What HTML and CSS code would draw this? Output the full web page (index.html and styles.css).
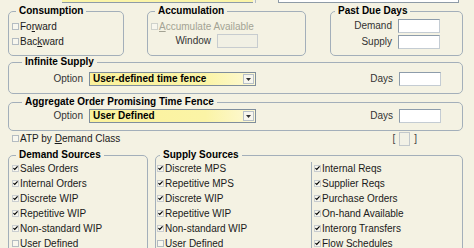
FILE: index.html
```html
<!DOCTYPE html>
<html>
<head>
<meta charset="utf-8">
<link rel="stylesheet" href="styles.css">
</head>
<body>
<div class="topstrip">
  <div class="ts-yellow"></div>
  <div class="ts-sep"></div>
  <div class="ts-white"></div>
</div>

<div class="row1">
  <fieldset class="grp cons">
    <legend>Consumption</legend>
    <div class="cbrow"><span class="cb"></span><span>Fo<u>r</u>ward</span></div>
    <div class="cbrow"><span class="cb"></span><span>Bac<u>k</u>ward</span></div>
  </fieldset>
  <fieldset class="grp accu">
    <legend>Accumulation</legend>
    <div class="cbrow dis"><span class="cb dis"></span><span><u>A</u>ccumulate Available</span></div>
    <div class="frow"><span class="lbl win-lbl">Window</span><span class="inp dis w41"></span></div>
  </fieldset>
  <fieldset class="grp past">
    <legend>Past Due Days</legend>
    <div class="frow r-dem"><span class="lbl pd-lbl">Demand</span><span class="inp w42"></span></div>
    <div class="frow r-sup"><span class="lbl pd-lbl">Supply</span><span class="inp w42"></span></div>
  </fieldset>
</div>

<fieldset class="grp wide inf">
  <legend>Infinite Supply</legend>
  <div class="frow opt">
    <span class="lbl opt-lbl">Option</span>
    <span class="sel"><span class="sel-txt">User-defined time fence</span><span class="sel-btn"><svg width="5" height="3" viewBox="0 0 5 3"><path d="M0 0H5L2.5 3Z" fill="#333"/></svg></span></span>
    <span class="fill"></span>
    <span class="lbl">Days</span>
    <span class="inp w42 days"></span>
  </div>
</fieldset>

<fieldset class="grp wide agg">
  <legend>Aggregate Order Promising Time Fence</legend>
  <div class="frow opt">
    <span class="lbl opt-lbl">Option</span>
    <span class="sel"><span class="sel-txt">User Defined</span><span class="sel-btn"><svg width="5" height="3" viewBox="0 0 5 3"><path d="M0 0H5L2.5 3Z" fill="#333"/></svg></span></span>
    <span class="fill"></span>
    <span class="lbl">Days</span>
    <span class="inp w42 days"></span>
  </div>
</fieldset>

<div class="atp">
  <div class="cbrow"><span class="cb"></span><span>ATP by <u>D</u>emand Class</span></div>
  <span class="fill"></span>
  <span class="brk">[</span><span class="mini"></span><span class="brk">]</span>
</div>

<div class="row4">
  <fieldset class="grp dem">
    <legend>Demand Sources</legend>
    <div class="list">
      <div class="cbrow"><span class="cb on"><svg width="7" height="6" viewBox="0 0 7 6"><path d="M0.6 3.2L2.5 5L6.4 0.8" fill="none" stroke="#000" stroke-width="1.6"/></svg></span><span>Sales Orders</span></div>
      <div class="cbrow"><span class="cb on"><svg width="7" height="6" viewBox="0 0 7 6"><path d="M0.6 3.2L2.5 5L6.4 0.8" fill="none" stroke="#000" stroke-width="1.6"/></svg></span><span>Internal Orders</span></div>
      <div class="cbrow"><span class="cb on"><svg width="7" height="6" viewBox="0 0 7 6"><path d="M0.6 3.2L2.5 5L6.4 0.8" fill="none" stroke="#000" stroke-width="1.6"/></svg></span><span>Discrete WIP</span></div>
      <div class="cbrow"><span class="cb on"><svg width="7" height="6" viewBox="0 0 7 6"><path d="M0.6 3.2L2.5 5L6.4 0.8" fill="none" stroke="#000" stroke-width="1.6"/></svg></span><span>Repetitive WIP</span></div>
      <div class="cbrow"><span class="cb on"><svg width="7" height="6" viewBox="0 0 7 6"><path d="M0.6 3.2L2.5 5L6.4 0.8" fill="none" stroke="#000" stroke-width="1.6"/></svg></span><span>Non-standard WIP</span></div>
      <div class="cbrow"><span class="cb"></span><span>User Defined</span></div>
    </div>
  </fieldset>
  <fieldset class="grp sup">
    <legend>Supply Sources</legend>
    <div class="cols">
      <div class="list col-l">
        <div class="cbrow"><span class="cb on"><svg width="7" height="6" viewBox="0 0 7 6"><path d="M0.6 3.2L2.5 5L6.4 0.8" fill="none" stroke="#000" stroke-width="1.6"/></svg></span><span>Discrete MPS</span></div>
        <div class="cbrow"><span class="cb on"><svg width="7" height="6" viewBox="0 0 7 6"><path d="M0.6 3.2L2.5 5L6.4 0.8" fill="none" stroke="#000" stroke-width="1.6"/></svg></span><span>Repetitive MPS</span></div>
        <div class="cbrow"><span class="cb on"><svg width="7" height="6" viewBox="0 0 7 6"><path d="M0.6 3.2L2.5 5L6.4 0.8" fill="none" stroke="#000" stroke-width="1.6"/></svg></span><span>Discrete WIP</span></div>
        <div class="cbrow"><span class="cb on"><svg width="7" height="6" viewBox="0 0 7 6"><path d="M0.6 3.2L2.5 5L6.4 0.8" fill="none" stroke="#000" stroke-width="1.6"/></svg></span><span>Repetitive WIP</span></div>
        <div class="cbrow"><span class="cb on"><svg width="7" height="6" viewBox="0 0 7 6"><path d="M0.6 3.2L2.5 5L6.4 0.8" fill="none" stroke="#000" stroke-width="1.6"/></svg></span><span>Non-standard WIP</span></div>
        <div class="cbrow"><span class="cb"></span><span>User Defined</span></div>
      </div>
      <div class="list col-r">
        <div class="cbrow"><span class="cb on"><svg width="7" height="6" viewBox="0 0 7 6"><path d="M0.6 3.2L2.5 5L6.4 0.8" fill="none" stroke="#000" stroke-width="1.6"/></svg></span><span>Internal Reqs</span></div>
        <div class="cbrow"><span class="cb on"><svg width="7" height="6" viewBox="0 0 7 6"><path d="M0.6 3.2L2.5 5L6.4 0.8" fill="none" stroke="#000" stroke-width="1.6"/></svg></span><span>Supplier Reqs</span></div>
        <div class="cbrow"><span class="cb on"><svg width="7" height="6" viewBox="0 0 7 6"><path d="M0.6 3.2L2.5 5L6.4 0.8" fill="none" stroke="#000" stroke-width="1.6"/></svg></span><span>Purchase Orders</span></div>
        <div class="cbrow"><span class="cb on"><svg width="7" height="6" viewBox="0 0 7 6"><path d="M0.6 3.2L2.5 5L6.4 0.8" fill="none" stroke="#000" stroke-width="1.6"/></svg></span><span>On-hand Available</span></div>
        <div class="cbrow"><span class="cb on"><svg width="7" height="6" viewBox="0 0 7 6"><path d="M0.6 3.2L2.5 5L6.4 0.8" fill="none" stroke="#000" stroke-width="1.6"/></svg></span><span>Interorg Transfers</span></div>
        <div class="cbrow"><span class="cb on"><svg width="7" height="6" viewBox="0 0 7 6"><path d="M0.6 3.2L2.5 5L6.4 0.8" fill="none" stroke="#000" stroke-width="1.6"/></svg></span><span>Flow Schedules</span></div>
      </div>
    </div>
  </fieldset>
</div>
</body>
</html>
```

FILE: styles.css
```css
* { box-sizing: border-box; }

html, body {
  margin: 0;
  padding: 0;
}

body {
  width: 474px;
  height: 248px;
  overflow: hidden;
  background: #f4f2e3;
  font-family: "Liberation Sans Narrow", "Liberation Sans", Arial, sans-serif;
  font-size: 10px;
  line-height: 12px;
  color: #1a1a1a;
}

u { text-decoration: underline; text-underline-offset: 1px; }

/* top strip (bottom edge of fields above) */
.topstrip {
  display: flex;
  height: 3px;
}
.ts-yellow {
  margin-left: 62px;
  width: 191px;
  background: #fbf5a8;
  border-bottom: 1px solid #8e9ba7;
}
.ts-sep {
  margin-left: 2px;
  width: 1px;
  background: #b5bec5;
}
.ts-white {
  margin-left: 22px;
  width: 181px;
  background: #ffffff;
  border: 1px solid #8e9ba7;
  border-top: 0;
}

/* group boxes */
.grp {
  margin: 0;
  padding: 0;
  min-width: 0;
  border: 1px solid #a3afba;
  border-radius: 5px;
}
.grp legend {
  font-weight: bold;
  line-height: 10px;
  padding: 0 3px;
  margin-left: 4px;
  color: #000;
}

.row1 {
  display: flex;
  margin-top: 3px;
  padding-left: 8px;
}
.row1 .grp { height: 50px; }
.cons { width: 116px; padding: 3px 0 0 3px; }
.accu { width: 159px; margin-left: 23px; padding: 3px 0 0 3px; }
.past { width: 133px; margin-left: 24px; padding: 3px 0 0 0; }

.cbrow {
  display: flex;
  align-items: center;
  height: 15px;
  white-space: nowrap;
}
.cbrow.dis { color: #a3a394; }

.cb {
  display: inline-flex;
  align-items: center;
  justify-content: center;
  width: 7px;
  height: 7px;
  margin-right: 1px;
  border: 1px solid #b4bcc2;
  background: #f8f7ee;
  flex: none;
}
.cb.dis { border-color: #cfd2cc; }
.cb.on { border-color: #c9cdd0; }
.cb svg { display: block; margin-top: -1px; }

.frow {
  display: flex;
  align-items: center;
  height: 14px;
  white-space: nowrap;
}
.lbl { color: #333; }
.win-lbl { width: 60px; text-align: right; margin-right: 6px; }
.pd-lbl { width: 61px; text-align: right; margin-right: 6px; }
.r-sup { margin-top: 2px; }

.inp {
  display: block;
  height: 14px;
  background: #fff;
  border: 1px solid #8d9cab;
  border-right-color: #c4ccd3;
  border-bottom-color: #c4ccd3;
}
.inp.dis {
  background: #f1f0e4;
  border-color: #c7cccf;
}
.w41 { width: 41px; }
.w42 { width: 42px; }

/* wide groups */
.wide {
  margin-left: 8px;
  width: 455px;
  padding: 0 21px 7px 9px;
}
.inf { margin-top: 1px; padding-top: 5px; }
.agg { margin-top: 3px; padding-top: 2px; }
.opt-lbl { width: 65px; text-align: right; margin-right: 6px; }
.days { margin-left: 6px; }
.fill { flex: 1; }

.sel {
  display: flex;
  align-items: center;
  width: 167px;
  height: 14px;
  border: 1px solid #7f8e9c;
  background: linear-gradient(to right, #fbf29c 0%, #fbf4a6 70%, #fdf9d6 100%);
  color: #000;
  font-weight: bold;
}
.sel-txt { flex: 1; padding-left: 3px; }
.sel-btn {
  display: flex;
  align-items: center;
  justify-content: center;
  width: 11px;
  height: 10px;
  margin-right: 1px;
  background: #f7f6ee;
  border: 1px solid #b7c0c8;
}

/* ATP row */
.atp {
  display: flex;
  align-items: center;
  height: 15px;
  padding: 0 57px 0 12px;
}
.brk { color: #444; }
.mini {
  width: 11px;
  height: 14px;
  margin: 0 4px;
  border: 1px solid #c2c8cc;
  background: #f2f1e6;
}

/* sources */
.row4 {
  display: flex;
  margin-top: 4px;
  padding-left: 8px;
}
.row4 .grp { height: 110px; }
.dem { width: 140px; padding: 1px 0 0 3px; }
.sup { width: 308px; margin-left: 7px; padding: 1px 0 0 0; }
.cols { display: flex; }
.col-l { width: 155px; padding-left: 1px; }
.col-r {
  flex: 1;
  margin-top: 1px;
  padding-left: 2px;
  border-left: 1px solid #a3afba;
}
.col-r .cbrow:first-child { margin-top: -1px; }
```
